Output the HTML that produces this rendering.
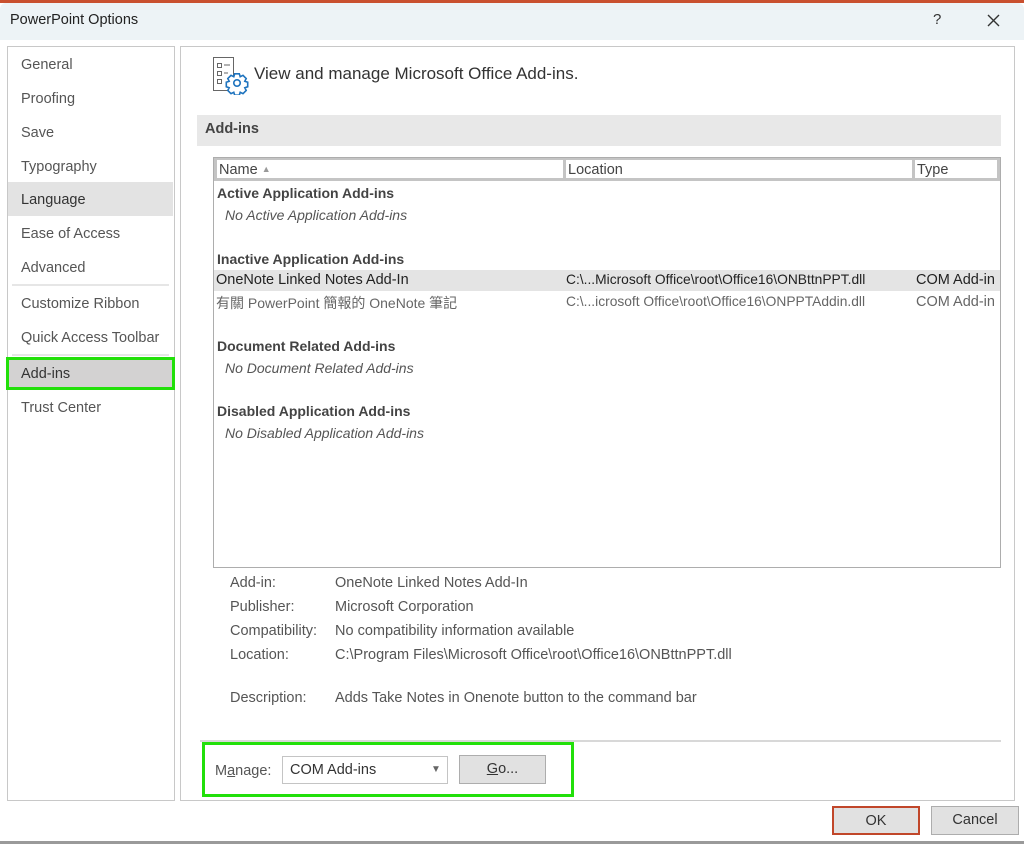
<!DOCTYPE html>
<html><head><meta charset="utf-8"><style>
*{margin:0;padding:0;box-sizing:border-box}
body{width:1024px;height:844px;background:#fff;font-family:"Liberation Sans","Noto Sans CJK TC",sans-serif;font-size:14px;color:#444;position:relative;overflow:hidden}
.a{position:absolute;white-space:nowrap}
.nav{left:21px;color:#555;font-size:14.5px}
.h{font-weight:bold;color:#444;font-size:14px}
.i{font-style:italic;color:#555;font-size:14px}
.t{font-size:14.5px}
.btn{position:absolute;border:1px solid #adadad;background:#e1e1e1;text-align:center;color:#333;font-size:14.5px}
</style></head><body>
<div class="a" style="left:0;top:0;width:1024px;height:3px;background:#c9502f"></div>
<div class="a" style="left:0;top:3px;width:1024px;height:37px;background:#edf3f6;border-radius:6px 6px 0 0"></div>
<div class="a" style="left:10px;top:12px;font-size:14.5px;color:#222">PowerPoint Options</div>
<div class="a" style="left:933px;top:11px;font-size:15px;color:#333">?</div>
<svg class="a" style="left:987px;top:14px" width="13" height="13"><path d="M1 1L12 12M12 1L1 12" stroke="#333" stroke-width="1.4"/></svg>

<div class="a" style="left:7px;top:46px;width:168px;height:755px;border:1px solid #c8c8c8"></div>
<div class="a" style="left:180px;top:46px;width:835px;height:755px;border:1px solid #c8c8c8"></div>

<div class="a nav" style="top:57px">General</div>
<div class="a nav" style="top:91px">Proofing</div>
<div class="a nav" style="top:125px">Save</div>
<div class="a nav" style="top:159px">Typography</div>
<div class="a" style="left:8px;top:182px;width:165px;height:34px;background:#e3e3e3"></div>
<div class="a nav" style="top:192px;color:#333">Language</div>
<div class="a nav" style="top:226px">Ease of Access</div>
<div class="a nav" style="top:260px">Advanced</div>
<div class="a" style="left:12px;top:284px;width:157px;height:2px;background:#e6e6e6"></div>
<div class="a nav" style="top:296px">Customize Ribbon</div>
<div class="a nav" style="top:330px">Quick Access Toolbar</div>
<div class="a" style="left:12px;top:354px;width:157px;height:2px;background:#e6e6e6"></div>
<div class="a" style="left:6px;top:357px;width:169px;height:33px;background:#d3d2d2;border:3px solid #22e00a"></div>
<div class="a nav" style="top:366px;color:#333">Add-ins</div>
<div class="a nav" style="top:400px">Trust Center</div>

<svg class="a" style="left:211px;top:55px" width="40" height="40">
<rect x="2.5" y="2.5" width="20" height="33" fill="#fff" stroke="#666"/>
<rect x="6.5" y="8.5" width="4" height="4" fill="none" stroke="#666"/><path d="M13 10h6" stroke="#666"/>
<rect x="6.5" y="16.5" width="4" height="4" fill="none" stroke="#666"/><path d="M13 18h4" stroke="#666"/>
<rect x="6.5" y="24.5" width="4" height="4" fill="none" stroke="#666"/>
<g transform="translate(26,28) scale(1.15)" fill="#fff" stroke="#1e73be" stroke-width="1.4">
<path d="M-2-8h4l.8 2.5 2.4-1.2 2.8 2.8-1.2 2.4 2.5.8v4l-2.5.8 1.2 2.4-2.8 2.8-2.4-1.2-.8 2.5h-4l-.8-2.5-2.4 1.2-2.8-2.8 1.2-2.4-2.5-.8v-4l2.5-.8-1.2-2.4 2.8-2.8 2.4 1.2z"/>
<circle r="2.8"/></g></svg>
<div class="a" style="left:254px;top:64px;font-size:17px;color:#333">View and manage Microsoft Office Add-ins.</div>

<div class="a" style="left:197px;top:115px;width:804px;height:31px;background:#e8e8e8"></div>
<div class="a" style="left:205px;top:121px;font-weight:bold;font-size:14.5px;color:#444">Add-ins</div>

<div class="a" style="left:213px;top:157px;width:788px;height:411px;border:1px solid #adadad"></div>
<div class="a" style="left:214px;top:158px;width:786px;height:23px;border:3px solid #c4c4c4;border-top:2px solid #c4c4c4"></div>
<div class="a" style="left:563px;top:158px;width:3px;height:23px;background:#c4c4c4"></div>
<div class="a" style="left:912px;top:158px;width:3px;height:23px;background:#c4c4c4"></div>
<div class="a t" style="left:219px;top:162px">Name <span style="font-size:9px;color:#999;vertical-align:2px">▲</span></div>
<div class="a t" style="left:568px;top:162px">Location</div>
<div class="a t" style="left:917px;top:162px">Type</div>

<div class="a h" style="left:217px;top:185px">Active Application Add-ins</div>
<div class="a i" style="left:225px;top:207px">No Active Application Add-ins</div>
<div class="a h" style="left:217px;top:251px">Inactive Application Add-ins</div>
<div class="a" style="left:214px;top:270px;width:786px;height:21px;background:#e4e4e4"></div>
<div class="a t" style="left:216px;top:272px;color:#222">OneNote Linked Notes Add-In</div>
<div class="a t" style="left:566px;top:272px;color:#222;font-size:13.8px">C:\...Microsoft Office\root\Office16\ONBttnPPT.dll</div>
<div class="a t" style="left:916px;top:272px;color:#222">COM Add-in</div>
<div class="a" style="left:216px;top:293px;color:#666;font-size:14px">有關 PowerPoint 簡報的 OneNote 筆記</div>
<div class="a t" style="left:566px;top:294px;color:#666;font-size:13.8px">C:\...icrosoft Office\root\Office16\ONPPTAddin.dll</div>
<div class="a t" style="left:916px;top:294px;color:#666">COM Add-in</div>
<div class="a h" style="left:217px;top:338px">Document Related Add-ins</div>
<div class="a i" style="left:225px;top:360px">No Document Related Add-ins</div>
<div class="a h" style="left:217px;top:403px">Disabled Application Add-ins</div>
<div class="a i" style="left:225px;top:425px">No Disabled Application Add-ins</div>

<div class="a t" style="left:230px;top:575px;color:#555">Add-in:</div>
<div class="a t" style="left:335px;top:575px;color:#555">OneNote Linked Notes Add-In</div>
<div class="a t" style="left:230px;top:599px;color:#555">Publisher:</div>
<div class="a t" style="left:335px;top:599px;color:#555">Microsoft Corporation</div>
<div class="a t" style="left:230px;top:623px;color:#555">Compatibility:</div>
<div class="a t" style="left:335px;top:623px;color:#555">No compatibility information available</div>
<div class="a t" style="left:230px;top:647px;color:#555">Location:</div>
<div class="a t" style="left:335px;top:647px;color:#555">C:\Program Files\Microsoft Office\root\Office16\ONBttnPPT.dll</div>
<div class="a t" style="left:230px;top:690px;color:#555">Description:</div>
<div class="a t" style="left:335px;top:690px;color:#555">Adds Take Notes in Onenote button to the command bar</div>

<div class="a" style="left:200px;top:740px;width:801px;height:2px;background:#d8d8d8"></div>
<div class="a" style="left:202px;top:742px;width:372px;height:55px;border:3px solid #22e00a"></div>
<div class="a t" style="left:215px;top:763px;color:#555">M<u>a</u>nage:</div>
<div class="a" style="left:282px;top:756px;width:166px;height:28px;border:1px solid #c4c4c4;background:#fff"></div>
<div class="a t" style="left:290px;top:762px;color:#333">COM Add-ins</div>
<div class="a" style="left:431px;top:764px;font-size:10px;color:#666">▼</div>
<div class="btn" style="left:459px;top:755px;width:87px;height:29px;line-height:27px"><u>G</u>o...</div>

<div class="btn" style="left:832px;top:806px;width:88px;height:29px;line-height:27px;border:2px solid #c1472a">OK</div>
<div class="btn" style="left:931px;top:806px;width:88px;height:29px;line-height:27px">Cancel</div>
<div class="a" style="left:0;top:841px;width:1024px;height:3px;background:#9a9a9a"></div>
</body></html>
